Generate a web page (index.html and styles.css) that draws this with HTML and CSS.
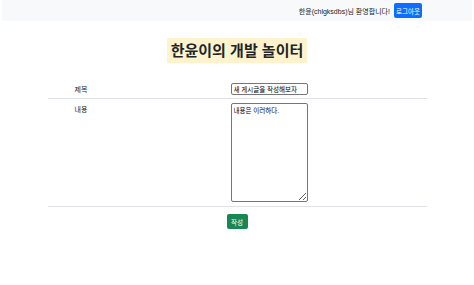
FILE: index.html
```html
<!DOCTYPE html>
<html lang="ko">
<head>
<meta charset="UTF-8">
<meta name="viewport" content="width=device-width, initial-scale=1.0">
<title>한윤이의 개발 놀이터</title>
<link rel="stylesheet" href="styles.css">
</head>
<body>
<nav class="navbar">
    <span class="welcome">한윤(chlgksdbs)님 환영합니다!</span>
    <button class="btn btn-blue">로그아웃</button>
</nav>

<div class="title-wrap">
    <h1 class="title">한윤이의 개발 놀이터</h1>
</div>

<form class="write-form">
    <div class="row">
        <div class="label">제목</div>
        <div class="field"><input type="text" value="새 게시글을 작성해보자" spellcheck="false"></div>
    </div>
    <div class="row">
        <div class="label">내용</div>
        <div class="field"><textarea spellcheck="false">내용은 이러하다.</textarea></div>
    </div>
    <div class="actions">
        <button type="button" class="btn btn-green">작성</button>
    </div>
</form>
</body>
</html>
```

FILE: styles.css
```css
* {
    padding: 0;
    margin: 0;
    box-sizing: border-box;
    font-family: "Liberation Sans", "Noto Sans CJK KR", sans-serif;
}
body {
    background: #ffffff;
    color: #212529;
}
.navbar {
    margin: 0 2px;
    height: 21px;
    background-color: #f8f9fa;
    display: flex;
    justify-content: flex-end;
    align-items: center;
    gap: 4px;
    padding-right: 50px;
}
.welcome {
    font-size: 7px;
}
.btn {
    border: none;
    border-radius: 2px;
    color: #ffffff;
    font-size: 6.5px;
    cursor: pointer;
}
.btn-blue {
    background-color: #0d6efd;
    width: 28px;
    height: 15px;
}
.btn-green {
    background-color: #198754;
    width: 21px;
    height: 15px;
}
.title-wrap {
    display: flex;
    justify-content: center;
    margin-top: 17px;
}
.title {
    background-color: #fff3cd;
    font-size: 15px;
    font-weight: bold;
    height: 25px;
    line-height: 25px;
    padding: 0 4px;
}
.write-form {
    width: 379px;
    margin: 17px auto 0;
}
.row {
    display: grid;
    grid-template-columns: 183px 1fr;
    border-bottom: 1px solid #dee2e6;
    padding: 3px 0 3px;
}
.row + .row {
    padding-top: 4px;
    padding-bottom: 4px;
}
.label {
    font-size: 7px;
    padding-left: 27px;
    padding-top: 1px;
}
.field input,
.field textarea {
    display: block;
    width: 77px;
    font-size: 6.5px;
    border: 1px solid #767676;
    border-radius: 2px;
    padding: 1px 2px;
    color: #000000;
}
.field input {
    height: 12px;
}
.field textarea {
    height: 99px;
    resize: vertical;
}
.actions {
    display: flex;
    justify-content: center;
    padding-top: 7px;
}
```
